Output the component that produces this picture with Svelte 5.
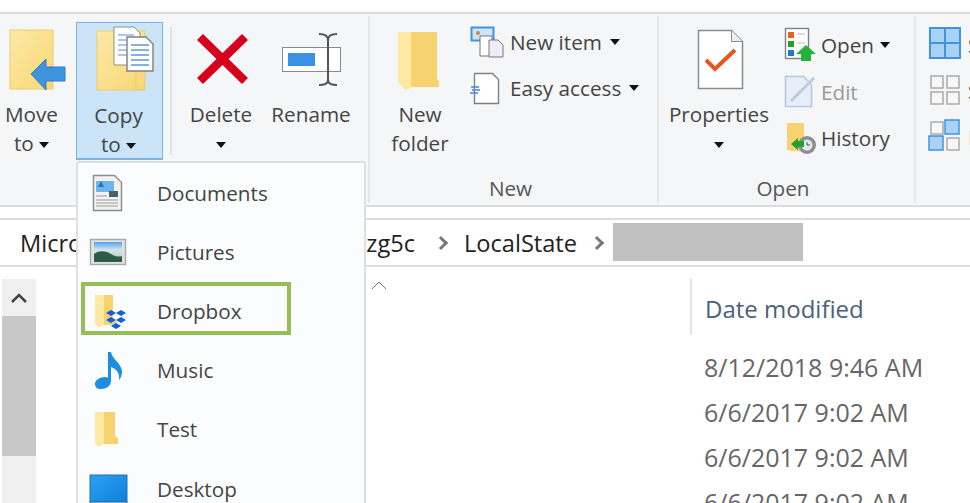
<script>
	const dates = ['8/12/2018 9:46 AM', '6/6/2017 9:02 AM', '6/6/2017 9:02 AM', '6/6/2017 9:02 AM'];
</script>

{#snippet folder(x, y, w, h)}
	<rect {x} {y} width={w} height={h} fill="url(#folderFill)" stroke="#eccb6e" stroke-width="1" />
{/snippet}

{#snippet caret()}
	<span class="caret"></span>
{/snippet}

<svg class="defs" width="0" height="0" aria-hidden="true">
	<defs>
		<linearGradient id="folderFill" x1="0" y1="0" x2="1" y2="1">
			<stop offset="0" stop-color="#fde9a6" />
			<stop offset="1" stop-color="#f8d775" />
		</linearGradient>
		<linearGradient id="picFill" x1="0" y1="0" x2="0" y2="1">
			<stop offset="0" stop-color="#5c9ee6" />
			<stop offset="0.4" stop-color="#d3e6ee" />
			<stop offset="1" stop-color="#aebfb4" />
		</linearGradient>
		<linearGradient id="deskFill" x1="0" y1="0" x2="1" y2="1">
			<stop offset="0" stop-color="#2aa3f2" />
			<stop offset="1" stop-color="#0f7fdc" />
		</linearGradient>
	</defs>
</svg>

<div class="top"></div>

<div class="ribbon">
	<div class="group organize">
		<div class="body">
			<div class="large move">
				<svg width="76" height="78" viewBox="0 0 76 78">
					{@render folder(10, 8, 43, 59)}
					<path d="M31 52 46 37v8h19v14H46v9z" fill="#3f94e0" stroke="#2c7cc6" />
				</svg>
				<span>Move</span>
				<span>to {@render caret()}</span>
			</div>
			<div class="large copy">
				<svg width="85" height="78" viewBox="0 0 85 78">
					{@render folder(20, 8, 48, 59)}
					<path d="M59 34v33" stroke="#eccb6e" />
					<path d="M37 4h20l6 6v32H37z" fill="#fff" stroke="#8d8d8d" />
					<path d="M41 12h16M41 17h18M41 22h18M41 27h18M41 32h18" stroke="#8fb4e2" stroke-width="1.5" />
					<path d="M50 14h19l7 7v27H50z" fill="#fff" stroke="#7f7f7f" stroke-width="1.4" />
					<path d="M54 22h18M54 27h18M54 32h18M54 37h18M54 42h18" stroke="#5f97dc" stroke-width="1.6" />
				</svg>
				<span>Copy</span>
				<span>to {@render caret()}</span>
			</div>
			<div class="sep"></div>
			<div class="large delete">
				<svg width="82" height="78" viewBox="0 0 82 78">
					<path d="M20 15 65 59M65 15 20 59" stroke="#d6001c" stroke-width="8.5" />
				</svg>
				<span>Delete</span>
				<span>{@render caret()}</span>
			</div>
			<div class="large rename">
				<svg width="98" height="78" viewBox="0 0 98 78">
					<rect x="20.5" y="25.5" width="58" height="24" fill="#fff" stroke="#8a8a8a" />
					<rect x="26" y="31" width="27" height="13" fill="#3b91e4" />
					<path d="M57 12c5 0 9 1 9 6v40c0 4-4 5-9 5M75 12c-5 0-9 1-9 6v40c0 4 4 5 9 5" fill="none" stroke="#555" stroke-width="2" />
				</svg>
				<span>Rename</span>
			</div>
		</div>
	</div>

	<div class="group new">
		<div class="body">
			<div class="large newfolder">
				<svg width="100" height="78" viewBox="0 0 100 78">
					<path d="M38 10h29v47l2 2v6H40z" fill="#f6d36f" />
					<path d="M28 10h13v56l-6 2-7-8z" fill="#fde8a4" />
				</svg>
				<span>New</span>
				<span>folder</span>
			</div>
			<div class="smalls">
				<div class="small">
					<svg width="36" height="36" viewBox="0 0 36 36">
						<rect x="1.5" y="3.5" width="22" height="13" fill="#cfe4f6" stroke="#3f94e0" stroke-width="2" />
						<circle cx="8" cy="9" r="2" fill="#c58a3c" />
						<path d="M10 12h12v20H10z" fill="#fff" stroke="#777" />
						<path d="M19 16h9l5 5v12H19z" fill="#f1ecf8" stroke="#777" />
					</svg>
					<span>New item</span>
					{@render caret()}
				</div>
				<div class="small">
					<svg width="36" height="36" viewBox="0 0 36 36">
						<path d="M4.5 3.5h18l6 6v24h-24z" fill="#fff" stroke="#808080" stroke-width="1.4" />
						<path d="M1 17h8M2 20h8M0 23h8" stroke="#3f86d8" stroke-width="1.5" />
					</svg>
					<span>Easy access</span>
					{@render caret()}
				</div>
			</div>
		</div>
		<div class="label">New</div>
	</div>

	<div class="group open">
		<div class="body">
			<div class="large props">
				<svg width="120" height="78" viewBox="0 0 120 78">
					<path d="M39.5 8.5h33l11 11v47h-44z" fill="#fff" stroke="#8c8c8c" stroke-width="1.5" />
					<path d="M72.5 8.5v11h11" fill="#eee" stroke="#8c8c8c" />
					<path d="M47 38l9 9 20-19" fill="none" stroke="#e5561f" stroke-width="4" />
				</svg>
				<span>Properties</span>
				<span>{@render caret()}</span>
			</div>
			<div class="smalls">
				<div class="small">
					<svg width="36" height="36" viewBox="0 0 36 36">
						<rect x="2.5" y="1.5" width="23" height="30" fill="#fff" stroke="#808080" stroke-width="1.4" />
						<rect x="5" y="5" width="6" height="6" fill="#e8601c" />
						<rect x="5" y="14" width="6" height="6" fill="#23a030" />
						<rect x="5" y="23" width="6" height="6" fill="#1f78cf" />
						<path d="M14 7h8M14 16h8" stroke="#bbb" />
						<path d="M23 18 33 27h-5v7H18v-7h-5z" fill="#22b33a" />
					</svg>
					<span>Open</span>
					{@render caret()}
				</div>
				<div class="small muted">
					<svg width="36" height="36" viewBox="0 0 36 36">
						<path d="M2.5 2.5h18l8 8v22h-26z" fill="#e6eef8" stroke="#b9c8da" stroke-width="1.5" />
						<path d="M8 27 31 4" stroke="#b9cbe0" stroke-width="3" />
					</svg>
					<span>Edit</span>
				</div>
				<div class="small">
					<svg width="36" height="36" viewBox="0 0 36 36">
						<path d="M4 3h17v28H9l-5-1z" fill="#f6d36f" />
						<circle cx="24" cy="25" r="9" fill="#8a8f93" />
						<circle cx="24" cy="25" r="5.5" fill="#e8e8e8" />
						<path d="M24 22v3h3" fill="none" stroke="#555" />
						<path d="M8 24l7-6v3h6v6h-6v3z" fill="#23a030" />
					</svg>
					<span>History</span>
				</div>
			</div>
		</div>
		<div class="label">Open</div>
	</div>

	<div class="group select">
		<div class="small">
			<svg width="36" height="36" viewBox="0 0 36 36">
				<rect x="2" y="1" width="30" height="30" fill="#a9d3f6" stroke="#3f94e0" stroke-width="2" />
				<path d="M17 1v30M2 16h30" stroke="#3f94e0" stroke-width="2" />
			</svg>
			<span>Select all</span>
		</div>
		<div class="small">
			<svg width="36" height="36" viewBox="0 0 36 36">
				<g fill="#f7f7f7" stroke="#aaa" stroke-width="1.5">
					<rect x="3" y="3" width="12" height="12" />
					<rect x="19" y="3" width="12" height="12" />
					<rect x="3" y="19" width="12" height="12" />
					<rect x="19" y="19" width="12" height="12" />
				</g>
			</svg>
			<span>Select none</span>
		</div>
		<div class="small">
			<svg width="36" height="36" viewBox="0 0 36 36">
				<g stroke-width="1.5">
					<rect x="3" y="3" width="12" height="12" fill="#f7f7f7" stroke="#aaa" />
					<rect x="17" y="1" width="14" height="14" fill="#a9d3f6" stroke="#3f94e0" />
					<rect x="1" y="17" width="14" height="14" fill="#a9d3f6" stroke="#3f94e0" />
					<rect x="19" y="19" width="12" height="12" fill="#f7f7f7" stroke="#aaa" />
				</g>
			</svg>
			<span>Invert selection</span>
		</div>
	</div>
</div>

<div class="gap"></div>

<div class="address">
	<span class="crumb first">Micro</span>
	<span class="crumb last">zg5c</span>
	<span class="chev wide"></span>
	<span class="crumb">LocalState</span>
	<span class="chev"></span>
	<div class="redact"></div>
</div>

<div class="content">
	<div class="scrollbar">
		<div class="up">
			<svg width="18" height="12" viewBox="0 0 18 12"><path d="M2 10 9 3l7 7" fill="none" stroke="#444" stroke-width="2.6" /></svg>
		</div>
		<div class="thumb"></div>
	</div>
	<div class="sort">
		<svg width="16" height="9" viewBox="0 0 16 9"><path d="M1 8 8 1l7 7" fill="none" stroke="#777" stroke-width="1" /></svg>
	</div>
	<div class="dates">
		<div class="head">Date modified</div>
		{#each dates as d}
			<div class="row">{d}</div>
		{/each}
	</div>
</div>

<div class="menu">
	<div class="item">
		<svg width="40" height="40" viewBox="0 0 40 40">
			<path d="M5.5 2.5h21l7 7v28h-28z" fill="#f2f2f2" stroke="#8c8c8c" stroke-width="1.4" />
			<rect x="8" y="8" width="18" height="11" fill="#6bb7ec" />
			<path d="M13 8l-3 6h6z" fill="#2a6fc0" />
			<rect x="21" y="18" width="9" height="6" fill="#48606e" />
			<path d="M8 23h11M8 27h22M8 30h22M8 33h22" stroke="#9c9c9c" stroke-width="1.2" />
		</svg>
		<span>Documents</span>
	</div>
	<div class="item">
		<svg width="40" height="40" viewBox="0 0 40 40">
			<rect x="2.5" y="7.5" width="35" height="25" fill="#dfe3e6" stroke="#a8a8a8" stroke-width="1.4" />
			<rect x="6" y="10" width="28" height="20" fill="url(#picFill)" />
			<path d="M6 22c6-4 12-3 17 0s8 3 11 2v6H6z" fill="#2f5a45" />
		</svg>
		<span>Pictures</span>
	</div>
	<div class="item">
		<svg width="40" height="40" viewBox="0 0 40 40">
			<path d="M12 4h13v25l4 1v4H12z" fill="#f6d36f" />
			<path d="M7 4h9v29l-5 4-4-4z" fill="#fde8a4" />
			<path d="M23 19l5 3-5 3-5-3zM33 19l5 3-5 3-5-3zM23 26l5 3-5 3-5-3zM33 26l5 3-5 3-5-3zM28 32l5 3-5 3-5-3z" fill="#0f5fe0" />
		</svg>
		<span>Dropbox</span>
	</div>
	<div class="item">
		<svg width="40" height="40" viewBox="0 0 40 40">
			<path d="M20 2h3c1 7 10 11 11 19 0 4-1 7-3 9 1-6-2-11-8-13v14c0 5-5 8-10 8-4 0-6-2-6-5 0-4 5-7 10-7 1 0 2 0 3 1z" fill="#1c8de0" />
		</svg>
		<span>Music</span>
	</div>
	<div class="item">
		<svg width="40" height="40" viewBox="0 0 40 40">
			<path d="M12 3h15v24l3 2v6H12z" fill="#f6d36f" />
			<path d="M7 3h9v32l-6 3-3-4z" fill="#fde8a4" />
		</svg>
		<span>Test</span>
	</div>
	<div class="item">
		<svg width="40" height="40" viewBox="0 0 40 40">
			<rect x="2" y="6" width="37" height="27" fill="url(#deskFill)" stroke="#2f6fa8" />
			<rect x="2" y="33" width="37" height="4" fill="#cfe4f6" stroke="#2f6fa8" />
		</svg>
		<span>Desktop</span>
	</div>
	<div class="highlight"></div>
</div>

<style>
	:global(body) {
		margin: 0;
		background: #fff;
		overflow: hidden;
		height: 503px;
		font-family: 'Open Sans', 'Noto Sans', sans-serif;
		font-size: 20.7px;
		color: #444;
	}

	.defs { position: absolute; }

	.top { height: 12px; }

	.ribbon {
		display: flex;
		height: 191px;
		background: #f5f6f7;
		border-top: 2px solid #dcdcdc;
		border-bottom: 2px solid #dcdcdc;
		overflow: hidden;
	}

	.group {
		position: relative;
		flex: none;
		display: flex;
		flex-direction: column;
		border-right: 2px solid #e6e7e9;
		margin: 2px 0;
	}
	.organize { width: 368px; }
	.new { width: 287px; }
	.open { width: 255px; }
	.select { flex: 1; border-right: 0; padding: 6px 0 0 12px; }

	.body { display: flex; height: 160px; padding-top: 6px; box-sizing: border-box; }

	.label {
		text-align: center;
		line-height: 30px;
		padding-right: 6px;
		color: #555;
	}
	.open .label { padding-right: 7px; }

	.large {
		flex: none;
		display: flex;
		flex-direction: column;
		align-items: center;
		line-height: 29px;
		height: 138px;
		box-sizing: border-box;
	}
	.large svg { display: block; flex: none; }
	.move { width: 76px; }
	.move span:not(.caret) { margin-right: 13px; }
	.copy {
		width: 87px;
		background: #cce4f7;
		border: 1px solid #7fb3df;
		border-bottom-width: 2px;
	}
	.copy span:not(.caret) { margin-right: 2px; }
	.sep {
		width: 2px;
		height: 128px;
		margin: 5px 8px 0 7px;
		background: #e2e3e5;
	}
	.delete { width: 82px; }
	.rename { width: 98px; }
	.newfolder { width: 100px; }
	.props { width: 120px; }

	.caret {
		display: inline-block;
		width: 0;
		height: 0;
		border-left: 5px solid transparent;
		border-right: 5px solid transparent;
		border-top: 6px solid #111;
		vertical-align: 3px;
	}

	.smalls { display: flex; flex-direction: column; }
	.new .smalls { margin-top: -3px; }
	.open .smalls { margin: 0 0 0 4px; }
	.open .small { gap: 2px; height: 46.5px; }

	.small {
		display: flex;
		align-items: center;
		gap: 4px;
		height: 46px;
		white-space: nowrap;
	}
	.small .caret { margin-left: 4px; }
	.small svg { flex: none; }
	.muted { color: #999; }

	.gap { height: 11px; }

	.address {
		display: flex;
		align-items: center;
		height: 45px;
		border-top: 2px solid #dcdcdc;
		border-bottom: 2px solid #dcdcdc;
		color: #222;
		font-size: 23.6px;
	}
	.first { margin-left: 20px; }
	.last { margin-left: 284px; }
	.chev {
		width: 7px;
		height: 7px;
		margin: 0 18px 0 15px;
		border-top: 3px solid #777;
		border-right: 3px solid #777;
		transform: rotate(45deg);
	}
	.chev.wide { margin-left: 21px; }
	.redact {
		width: 190px;
		height: 38px;
		margin: -2px 0 0 -7px;
		background: #c0c0c0;
	}

	.content { display: flex; height: 236px; overflow: hidden; }

	.scrollbar {
		flex: none;
		width: 34px;
		margin: 12px 0 0 2px;
		background: #f0f0f0;
	}
	.up { height: 37px; display: flex; align-items: center; justify-content: center; }
	.thumb { height: 140px; background: #c8c8c8; }

	.sort { margin: 14px 0 0 335px; flex: none; width: 333px; }
	.sort svg { display: block; }

	.dates { flex: none; }
	.head {
		border-left: 2px solid #e2e3e5;
		margin-left: -14px;
		padding-left: 13px;
		margin-top: 12px;
		height: 56px;
		line-height: 60px;
		margin-bottom: 10px;
		color: #4c607a;
		font-size: 24px;
	}
	.row { line-height: 45px; color: #666; white-space: nowrap; font-size: 25px; }

	.menu {
		position: absolute;
		left: 76px;
		top: 161px;
		width: 290px;
		height: 342px;
		background: #fbfcfd;
		border: 2px solid #dfdfdf;
		border-bottom: 0;
		border-radius: 3px 3px 0 0;
		box-sizing: border-box;
		display: flex;
		flex-direction: column;
	}
	.item {
		display: flex;
		align-items: center;
		flex: none;
		height: 59.2px;
		padding-left: 10px;
		gap: 29px;
		color: #444;
	}
	.item svg { flex: none; }

	.highlight {
		position: absolute;
		left: 3px;
		top: 119px;
		width: 210px;
		height: 53px;
		box-sizing: border-box;
		border: 4px solid #95bf55;
	}
</style>
